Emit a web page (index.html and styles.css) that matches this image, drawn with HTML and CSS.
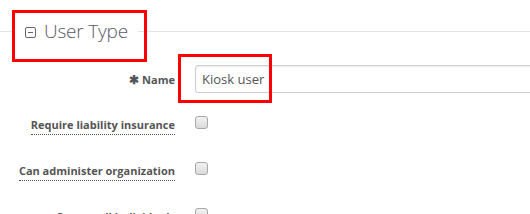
FILE: index.html
```html
<!DOCTYPE html>
<html lang="en">
<head>
    <meta charset="UTF-8">
    <title>User Type</title>
    <link rel="stylesheet" href="styles.css">
</head>
<body>

<div class="panel">
    <div class="legend-row">
        <div class="rule rule-short"></div>
        <div class="legend">
            <span class="toggle"></span>
            <span class="legend-text">User Type</span>
        </div>
        <div class="rule"></div>
    </div>

    <div class="form">
        <div class="row row-name">
            <label class="label required" for="userTypeName"><span class="star">&#10033;</span> Name</label>
            <input type="text" id="userTypeName" class="text-input" value="Kiosk user">
        </div>
        <div class="row">
            <label class="label label-check"><span class="hint">Require liability insurance</span></label>
            <input type="checkbox" class="check">
        </div>
        <div class="row">
            <label class="label label-check"><span class="hint">Can administer organization</span></label>
            <input type="checkbox" class="check">
        </div>
        <div class="row">
            <label class="label label-check"><span class="hint">Can enroll individuals</span></label>
            <input type="checkbox" class="check">
        </div>
    </div>

    <!-- annotation boxes -->
    <div class="mark mark-legend"></div>
    <div class="mark mark-input"></div>
</div>

</body>
</html>
```

FILE: styles.css
```css
body {
    margin: 0;
    padding: 0;
    background-color: #fff;
    color: #555;
    font-family: 'Open Sans', 'Noto Sans', sans-serif;
    overflow: hidden;
}

.panel {
    position: relative;
    height: 214px;
    padding-top: 11px;
    box-sizing: border-box;
    overflow: hidden;
}

.legend-row {
    display: flex;
    align-items: center;
    height: 40px;
}

.rule {
    flex: 1;
    height: 1px;
    background-color: #e3e3e3;
}

.rule-short {
    flex: 0 0 15px;
}

.legend {
    display: flex;
    align-items: center;
    padding: 0 10px;
    color: #5a5a66;
}

.toggle {
    width: 9px;
    height: 9px;
    border: 1px solid #666;
    border-radius: 2px;
    margin-right: 8px;
    margin-top: 3px;
    background: linear-gradient(#666, #666) center / 5px 1px no-repeat;
}

.legend-text {
    font-size: 19px;
    font-weight: 300;
    letter-spacing: -0.2px;
}

.form {
    padding-top: 14px;
}

.row {
    display: grid;
    grid-template-columns: 175px 1fr;
    column-gap: 20px;
    align-items: center;
    height: 30px;
    margin-bottom: 16px;
}

.row-name {
    height: 28px;
    margin-bottom: 14px;
}

.label {
    text-align: right;
    font-size: 11px;
    font-weight: 700;
    color: #555;
}

.label-check {
    padding-top: 4px;
}

.hint {
    border-bottom: 1px dotted #555;
    padding-bottom: 2px;
}

.star {
    font-size: 12px;
}

.text-input {
    height: 28px;
    width: 360px;
    box-sizing: border-box;
    padding: 0 6px;
    border: 1px solid #cfcfcf;
    border-radius: 3px;
    box-shadow: inset 0 1px 2px rgba(0, 0, 0, 0.08);
    font-family: 'Open Sans', sans-serif;
    font-size: 13px;
    color: #555;
}

.check {
    appearance: none;
    margin: 0;
    width: 13px;
    height: 13px;
    border: 1px solid #a8a8a8;
    border-radius: 3px;
    background: linear-gradient(#f2f2f2, #dadada);
    box-sizing: border-box;
}

.mark {
    position: absolute;
    border: 3px solid #ff0000;
    box-sizing: border-box;
}

.mark-legend {
    left: 12px;
    top: 10px;
    width: 135px;
    height: 52px;
}

.mark-input {
    left: 178px;
    top: 54px;
    width: 94px;
    height: 49px;
}
```
